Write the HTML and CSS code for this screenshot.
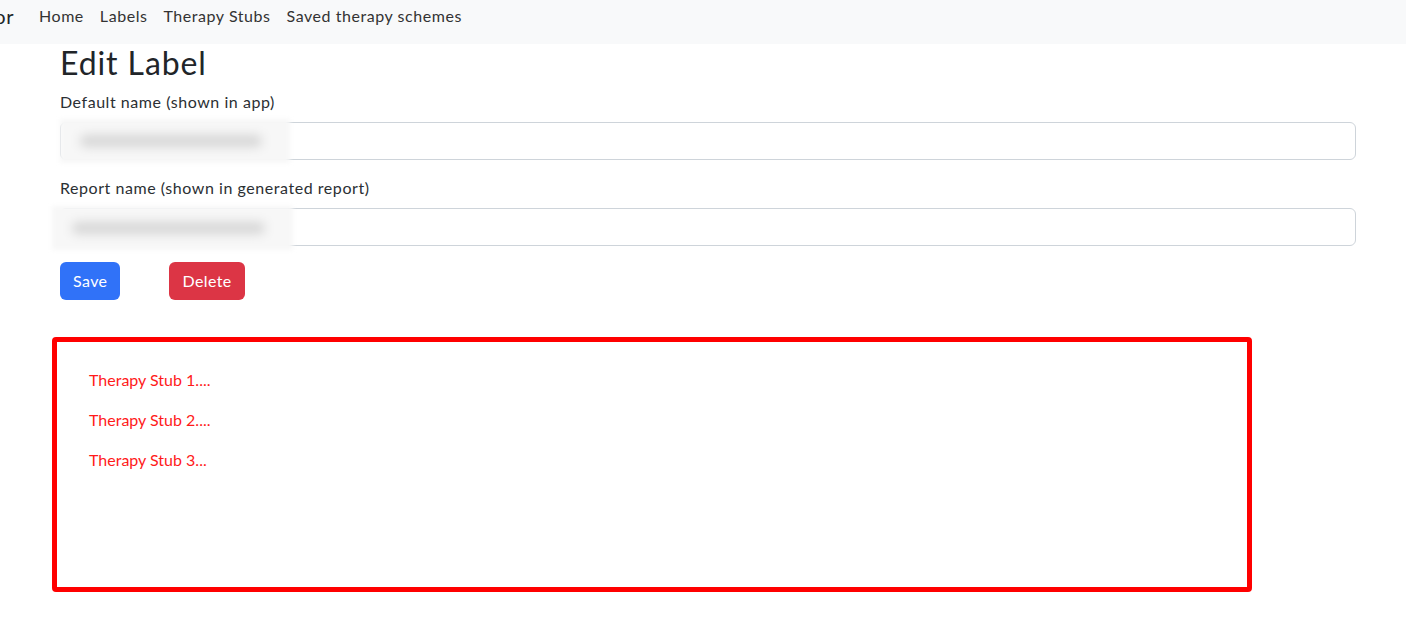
FILE: index.html
```html
<!DOCTYPE html>
<html lang="en">
<head>
<meta charset="utf-8">
<title>Edit Label</title>
<link rel="stylesheet" href="styles.css">
</head>
<body>
<nav class="navbar">
  <div class="brand"><span>Label Editor</span></div>
  <a class="nav-link" href="#">Home</a>
  <a class="nav-link" href="#">Labels</a>
  <a class="nav-link" href="#">Therapy Stubs</a>
  <a class="nav-link" href="#">Saved therapy schemes</a>
</nav>
<main class="container">
  <h1 class="title">Edit Label</h1>
  <label class="form-label">Default name (shown in app)</label>
  <div class="field">
    <input class="form-control" type="text" value="">
    <div class="blur blur-a"><div class="blur-text"></div></div>
  </div>
  <label class="form-label">Report name (shown in generated report)</label>
  <div class="field">
    <input class="form-control" type="text" value="">
    <div class="blur blur-b"><div class="blur-text"></div></div>
  </div>
  <div class="actions">
    <button class="btn btn-primary">Save</button>
    <button class="btn btn-danger">Delete</button>
  </div>
  <section class="stubs">
    <p class="stub">Therapy Stub 1....</p>
    <p class="stub">Therapy Stub 2....</p>
    <p class="stub">Therapy Stub 3...</p>
  </section>
</main>
</body>
</html>
```
FILE: styles.css
```css
* { box-sizing: border-box; }
html, body { margin: 0; padding: 0; }
body {
  font-family: Lato, "Noto Sans", sans-serif;
  font-size: 16px;
  line-height: 24px;
  letter-spacing: 0.55px;
  color: #212529;
  background: #fff;
  overflow: hidden;
}
.navbar {
  display: flex;
  align-items: flex-start;
  height: 44px;
  background: #f8f9fa;
  padding-top: 4px;
}
.brand {
  width: 14px;
  display: flex;
  justify-content: flex-end;
  white-space: nowrap;
  font-size: 20px;
  line-height: 24px;
  color: #212529;
  margin-right: 17px;
}
.nav-link {
  padding: 0 8px;
  color: #333;
  text-decoration: none;
  white-space: nowrap;
}
.container {
  padding: 0 50px 0 60px;
}
.title {
  font-size: 32px;
  font-weight: 400;
  line-height: 38px;
  letter-spacing: 0.9px;
  margin: 0 0 8px;
}
.form-label {
  display: block;
  margin-bottom: 8px;
  color: #2b2f33;
}
.field {
  position: relative;
  margin-bottom: 16px;
}
.form-control {
  display: block;
  width: 100%;
  height: 38px;
  border: 1px solid #ced4da;
  border-radius: 6px;
  padding: 6px 12px;
  font: inherit;
  background: #fff;
}
.blur {
  position: absolute;
  top: -3px;
  height: 44px;
  background: #f7f7f7;
  filter: blur(2px);
}
.blur-a { left: 0; width: 230px; }
.blur-b { left: -8px; width: 241px; top: -2px; }
.blur-text {
  position: absolute;
  left: 20px;
  right: 28px;
  top: 16px;
  height: 12px;
  background: #d6d6d6;
  border-radius: 6px;
  filter: blur(5px);
}
.actions {
  display: flex;
  gap: 49px;
}
.btn {
  font: inherit;
  letter-spacing: 0.4px;
  color: #fff;
  border: 1px solid transparent;
  border-radius: 6px;
  padding: 6px 12px;
  height: 38px;
}
.btn-primary { background: #3072f8; }
.btn-danger { background: #dc3545; }
.stubs {
  margin: 37px 0 0 -8px;
  width: 1200px;
  height: 255px;
  border: 5px solid #ff0000;
  border-radius: 4px;
  padding: 26px 32px;
}
.stub {
  margin: 0 0 16px;
  letter-spacing: 0;
  color: #ff1a1a;
}
```
